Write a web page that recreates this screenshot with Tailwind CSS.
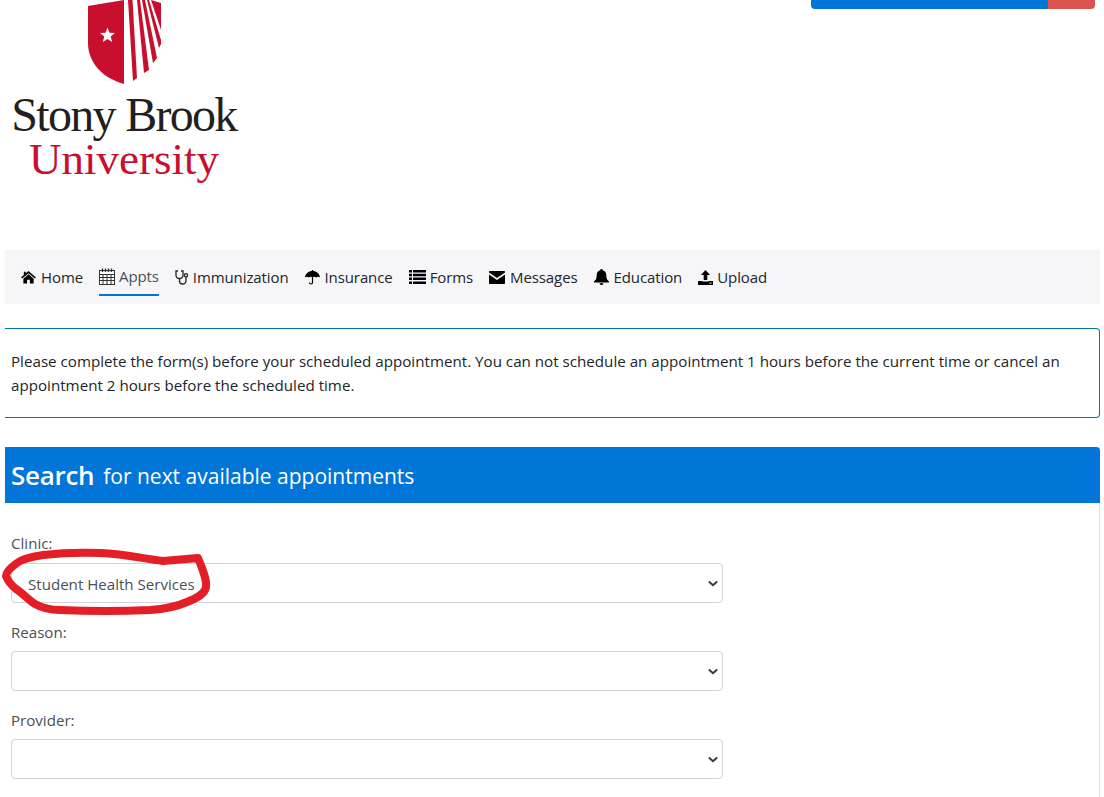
<!DOCTYPE html>
<html lang="en">
<head>
  <meta charset="UTF-8" />
  <meta name="viewport" content="width=device-width, initial-scale=1" />
  <title>Student Health Portal</title>
  <script src="https://cdn.jsdelivr.net/npm/@tailwindcss/browser@4"></script>
</head>
<body class="bg-white h-[797px] overflow-hidden relative font-['Open_Sans',sans-serif] text-[#212529]">
  <header class="h-[250px] flex justify-between items-start">
    <div class="w-[230px] h-[190px] ml-[9px] flex flex-col items-center">
      <svg class="w-[76px] h-[85px] ml-[4px] shrink-0" viewBox="0 0 76 85">
        <path d="M0 6 L36 0 V84 C14 78 0 62 0 43 Z" fill="#c8102e" />
        <path d="M19.5 27.5 l2 5.2 5.5 .3 -4.3 3.5 1.5 5.4 -4.7 -3 -4.7 3 1.5 -5.4 -4.3 -3.5 5.5 -.3 Z" fill="#fff" />
        <path d="M40 0 H44.5 L49 78 L45 81 Z" fill="#c8102e" />
        <path d="M49 0 H52 L61 70 L56 73 Z" fill="#c8102e" />
        <path d="M54 0 H57 L69 58 L65 63 Z" fill="#c8102e" />
        <path d="M59 0 H61 L73 40 V44 L71 48 Z" fill="#c8102e" />
        <path d="M63 0 L73 3 V30 Z" fill="#c8102e" />
      </svg>
      <div class="mt-[8px] font-['Liberation_Serif',serif] text-[48px] leading-[44px] tracking-[-1.7px] text-[#231f20] whitespace-nowrap">Stony Brook</div>
      <div class="mt-[1px] font-['Liberation_Serif',serif] text-[45px] leading-[42px] text-[#c8102e] whitespace-nowrap">University</div>
    </div>
    <div class="flex h-[9px] w-[284px] mr-[9px] rounded-b-[4px] overflow-hidden">
      <div class="flex-1 bg-[#0275d8]"></div>
      <div class="w-[47px] bg-[#d9534f]"></div>
    </div>
  </header>

  <div class="ml-[5px] mr-[4px]">
    <nav class="h-[54px] bg-[#f6f6f8] flex items-start pl-[16px] gap-[16px] text-[15px] tracking-[-0.1px] text-[#212529]">
      <a class="h-[46px] pt-[8px] flex items-center gap-[5px]" href="#">
        <svg class="w-[15px] h-[14px]" viewBox="0 0 16 15" fill="#000"><path d="M8 1 L16 8 L14.8 9.2 L8 3.4 L1.2 9.2 L0 8 L3 5.4 V2 H5 V3.6 Z M8 4.6 L13.5 9.3 V14.5 H9.5 V10.5 H6.5 V14.5 H2.5 V9.3 Z" /></svg>
        Home
      </a>
      <a class="h-[46px] pt-[8px] flex items-center gap-[4px] border-b-2 border-[#0275d8] text-[#495057]" href="#">
        <svg class="w-[16px] h-[17px]" viewBox="0 0 16 17" fill="none" stroke="#333" stroke-width="1"><rect x=".5" y="2.5" width="15" height="14" fill="#fff" /><path d="M.5 6.5 H15.5 M.5 9.5 H15.5 M.5 12.5 H15.5 M4 6.5 V16.5 M8 6.5 V16.5 M12 6.5 V16.5" /><path d="M3.5 .5 V4 M6.5 .5 V4 M9.5 .5 V4 M12.5 .5 V4" stroke-width="1.4" /></svg>
        Appts
      </a>
      <a class="h-[46px] pt-[8px] flex items-center gap-[4px]" href="#">
        <svg class="w-[14px] h-[15px]" viewBox="0 0 14 15" fill="none" stroke="#222" stroke-width="1.3"><path d="M3 1 H1 V5 C1 7.5 3 8.5 4.5 8.5 C6 8.5 8 7.5 8 5 V1 H6" /><path d="M4.5 8.5 V11 C4.5 13 6 14 7.5 14 C9.5 14 11 13 11 10.5 V7" /><circle cx="11" cy="5.2" r="1.6" /></svg>
        Immunization
      </a>
      <a class="h-[46px] pt-[8px] flex items-center gap-[5px]" href="#">
        <svg class="w-[15px] h-[15px]" viewBox="0 0 15 15"><path d="M7.5 1 C11.5 1 14.5 3.6 15 7.5 C14 6.4 12.6 6.4 11.3 7.4 C10 6.4 8.7 6.4 7.5 7.4 C6.3 6.4 5 6.4 3.7 7.4 C2.4 6.4 1 6.4 0 7.5 C.5 3.6 3.5 1 7.5 1 Z" fill="#000" /><path d="M7.5 0 V1 M7.5 7 V12.5 C7.5 14.5 4.5 14.5 4.5 12.5" fill="none" stroke="#000" stroke-width="1.2" /></svg>
        Insurance
      </a>
      <a class="h-[46px] pt-[8px] flex items-center gap-[4px]" href="#">
        <svg class="w-[17px] h-[14px]" viewBox="0 0 17 14" fill="#000"><path d="M0 0 H3 V2.5 H0 Z M4 0 H17 V2.5 H4 Z M0 3.8 H3 V6.3 H0 Z M4 3.8 H17 V6.3 H4 Z M0 7.6 H3 V10.1 H0 Z M4 7.6 H17 V10.1 H4 Z M0 11.4 H3 V13.9 H0 Z M4 11.4 H17 V13.9 H4 Z" /></svg>
        Forms
      </a>
      <a class="h-[46px] pt-[8px] flex items-center gap-[5px]" href="#">
        <svg class="w-[16px] h-[13px]" viewBox="0 0 16 13" fill="#000"><path d="M1 0 H15 C15.6 0 16 .4 16 1 V1.4 L8 7 L0 1.4 V1 C0 .4 .4 0 1 0 Z M0 3.4 L8 9 L16 3.4 V12 C16 12.6 15.6 13 15 13 H1 C.4 13 0 12.6 0 12 Z" /></svg>
        Messages
      </a>
      <a class="h-[46px] pt-[8px] flex items-center gap-[5px]" href="#">
        <svg class="w-[15px] h-[16px]" viewBox="0 0 15 16" fill="#000"><path d="M7.5 0 C8.3 0 8.8 .6 8.8 1.3 C11 1.9 12.3 3.8 12.3 6 C12.3 9.5 13 11 15 12.5 V13.5 H0 V12.5 C2 11 2.7 9.5 2.7 6 C2.7 3.8 4 1.9 6.2 1.3 C6.2 .6 6.7 0 7.5 0 Z M5.5 14.2 H9.5 C9.3 15.3 8.5 16 7.5 16 C6.5 16 5.7 15.3 5.5 14.2 Z" /></svg>
        Education
      </a>
      <a class="h-[46px] pt-[8px] flex items-center gap-[4px]" href="#">
        <svg class="w-[15px] h-[15px]" viewBox="0 0 15 15" fill="#000"><path d="M7.5 0 L12 5 H9.3 V10 H5.7 V5 H3 Z M0 11 H4.5 V11.5 H10.5 V11 H15 V15 H0 Z" /><rect x="11.5" y="12.5" width="2" height="1" fill="#f6f6f8" /></svg>
        Upload
      </a>
    </nav>

    <div class="mt-[24px] h-[90px] border border-l-0 border-[#0275a8] rounded-r-[4px] pl-[6px] pr-[20px] pt-[20px] text-[15.17px] leading-[24px] text-[#212529]">
      Please complete the form(s) before your scheduled appointment. You can not schedule an appointment 1 hours before the current time or cancel an appointment 2 hours before the scheduled time.
    </div>

    <section class="mt-[29px] h-[360px] border-r border-[#dddddd]">
      <div class="h-[56px] bg-[#0275d8] rounded-tr-[4px] pl-[6px] flex items-center text-white -mr-px">
        <span class="text-[26px] font-semibold tracking-[-0.3px]">Search</span>
        <span class="ml-[9px] mt-[3px] text-[21px]">for next available appointments</span>
      </div>
      <form class="pl-[6px] pt-[29px] w-[718px] text-[15.1px] text-[#495057]">
        <label class="block h-[31px] leading-[22px]">Clinic:</label>
        <div class="h-[40px] pl-[16px] pr-[4px] pt-[2px] border border-[#ced4da] rounded-[4px] flex items-center justify-between">
          <span>Student Health Services</span>
          <svg class="w-[10px] h-[7px] -mt-[2px]" viewBox="0 0 12 8" fill="none" stroke="#343a40" stroke-width="2.4"><path d="M1 1.5 L6 6 L11 1.5" /></svg>
        </div>
        <label class="block h-[48px] pt-[18px] leading-[22px]">Reason:</label>
        <div class="h-[40px] pr-[4px] border border-[#ced4da] rounded-[4px] flex items-center justify-end">
          <svg class="w-[10px] h-[7px]" viewBox="0 0 12 8" fill="none" stroke="#343a40" stroke-width="2.4"><path d="M1 1.5 L6 6 L11 1.5" /></svg>
        </div>
        <label class="block h-[48px] pt-[18px] leading-[22px]">Provider:</label>
        <div class="h-[40px] pr-[4px] border border-[#ced4da] rounded-[4px] flex items-center justify-end">
          <svg class="w-[10px] h-[7px]" viewBox="0 0 12 8" fill="none" stroke="#343a40" stroke-width="2.4"><path d="M1 1.5 L6 6 L11 1.5" /></svg>
        </div>
      </form>
    </section>
  </div>

  <!-- red marker scribble on top of the screenshot -->
  <svg class="absolute left-0 top-0 pointer-events-none" width="1104" height="797" fill="none">
    <path d="M198 558 L163 561 C140 558 125 554 100 553 C75 552 60 553 43 555 C30 557 22 559 17 563 C10 568 6 572 6 576 C8 581 11 585 16 589 C24 594 28 600 35 604 C42 608 50 610 60 610 C85 611 125 611 150 610 C165 609 178 606 187 602 C197 598 205 594 206 587 C207 580 203 570 198 558 Z" stroke="#e41e26" stroke-width="8" stroke-linejoin="round" />
  </svg>
</body>
</html>
